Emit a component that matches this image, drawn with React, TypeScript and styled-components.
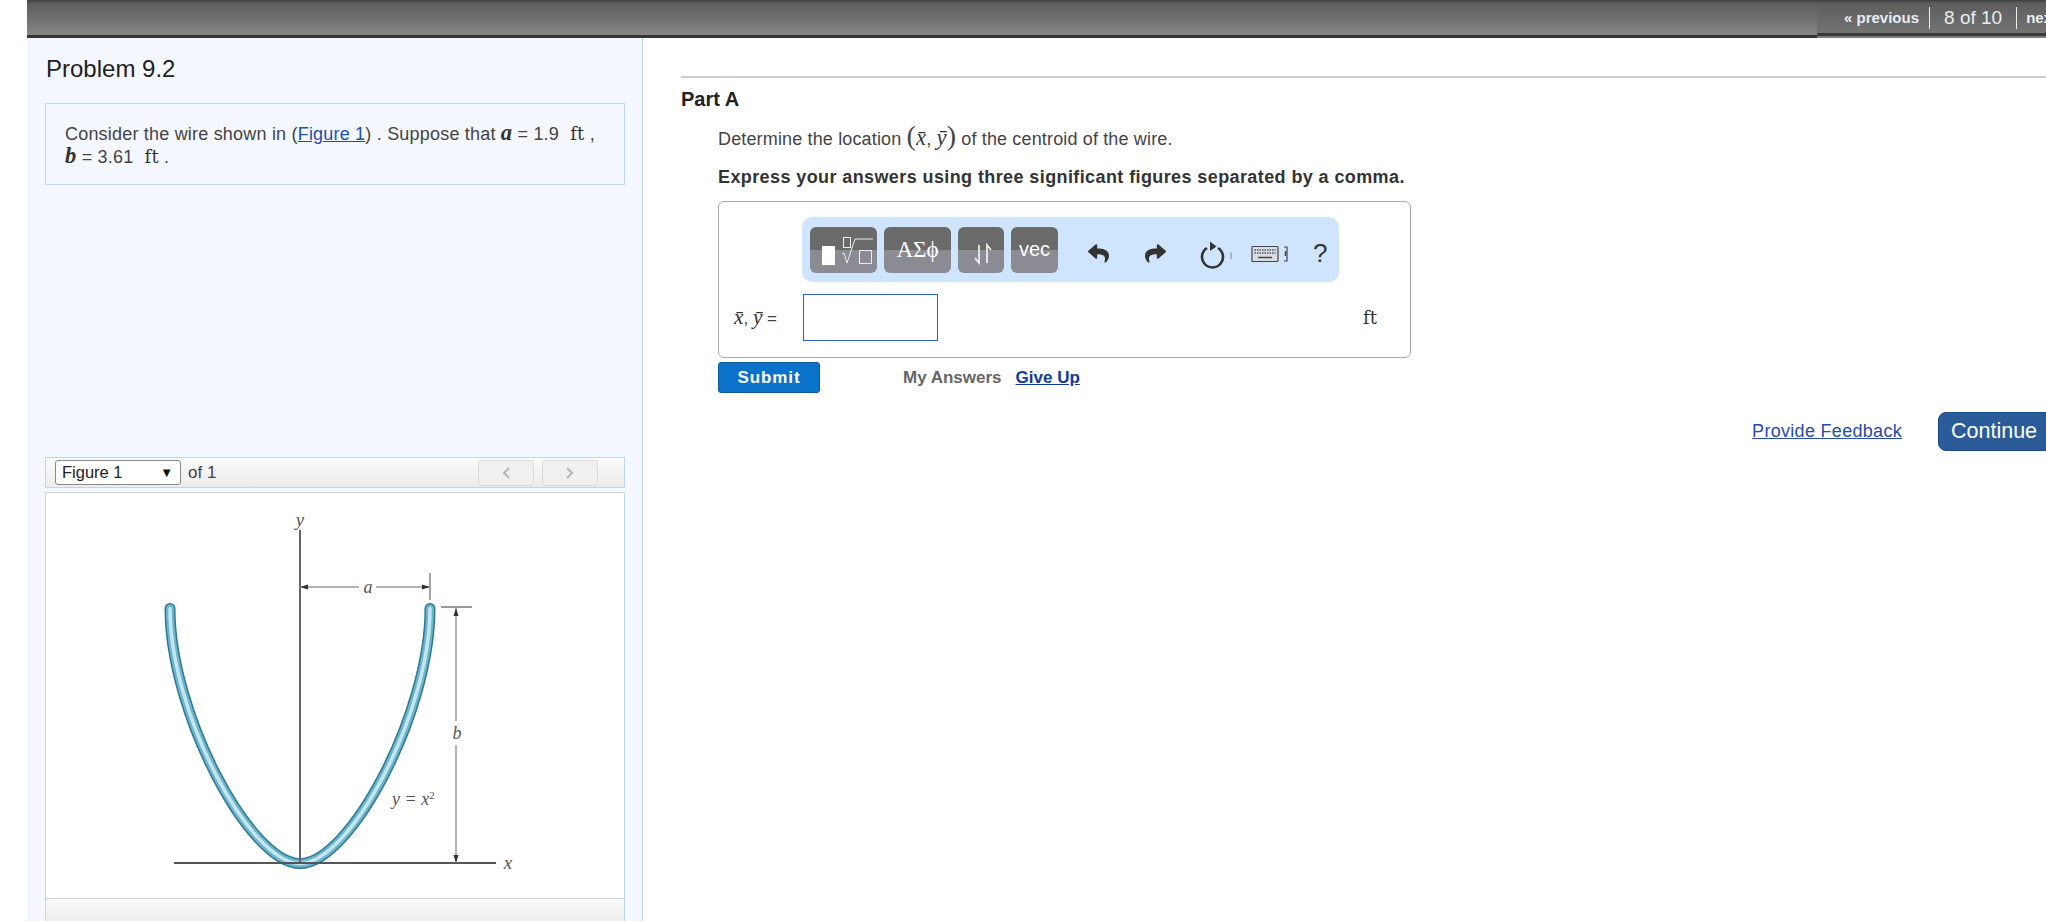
import React from "react";
import styled, { createGlobalStyle } from "styled-components";
import { FaReply, FaShare } from "react-icons/fa";

const GlobalStyle = createGlobalStyle`
  html, body {
    margin: 0;
    padding: 0;
    background: #fff;
    overflow: hidden;
    height: 921px;
  }
  body {
    font-family: "Liberation Sans", Arial, sans-serif;
    color: #333;
  }
`;

export const App: React.FC = () => {
  return (
    <Page>
      <GlobalStyle />
      <TopBar>
        <PageNav>
          <NavLink>« previous</NavLink>
          <NavCount>8 of 10</NavCount>
          <NavLink $last>next »</NavLink>
        </PageNav>
      </TopBar>
      <Columns>
        <LeftPanel>
          <Title>Problem 9.2</Title>
          <IntroBox>
            Consider the wire shown in (<FigureLink>Figure 1</FigureLink>) . Suppose that <MathVar $bold>a</MathVar> = 1.9 <Unit>ft</Unit> ,
            <br />
            <MathVar $bold>b</MathVar> = 3.61 <Unit>ft</Unit> .
          </IntroBox>
          <FigureBar>
            <FigureSelect>
              <span>Figure 1</span>
              <SelectArrow>▼</SelectArrow>
            </FigureSelect>
            <OfLabel>of 1</OfLabel>
            <PagerButton $first>
              <Chevron viewBox="0 0 10 14"><path d="M8 2 L3 7 L8 12" /></Chevron>
            </PagerButton>
            <PagerButton>
              <Chevron viewBox="0 0 10 14"><path d="M2 2 L7 7 L2 12" /></Chevron>
            </PagerButton>
          </FigureBar>
          <FigureBox>
            <WireFigure />
          </FigureBox>
          <FigureFooter />
        </LeftPanel>
        <RightPanel>
          <Rule />
          <PartTitle>Part A</PartTitle>
          <PartBody>
            <Question>
              Determine the location <Paren>(</Paren><MathVar>x̄</MathVar>, <MathVar>ȳ</MathVar><Paren>)</Paren> of the centroid of the wire.
            </Question>
            <Instruction>Express your answers using three significant figures separated by a comma.</Instruction>
            <AnswerBox>
              <Palette>
                <ToolButton $w={67}><RootGlyph /></ToolButton>
                <ToolButton $w={67}><GreekText>ΑΣϕ</GreekText></ToolButton>
                <ToolButton $w={46}><ArrowsGlyph /></ToolButton>
                <ToolButton $w={47}><VecText>vec</VecText></ToolButton>
                <IconSlot $w={28} $ml={26}><FaReply size={21} /></IconSlot>
                <IconSlot $w={28} $ml={29}><FaShare size={21} /></IconSlot>
                <IconSlot $w={38} $ml={29}><ResetGlyph /></IconSlot>
                <IconSlot $w={40} $ml={14}><KeyboardGlyph /></IconSlot>
                <HelpMark>?</HelpMark>
              </Palette>
              <AnswerRow>
                <AnswerLabel><MathVar>x̄</MathVar>, <MathVar>ȳ</MathVar> =</AnswerLabel>
                <AnswerInput />
                <AnswerUnit>ft</AnswerUnit>
              </AnswerRow>
            </AnswerBox>
            <ActionRow>
              <SubmitButton>Submit</SubmitButton>
              <MyAnswers>My Answers</MyAnswers>
              <GiveUp>Give Up</GiveUp>
            </ActionRow>
          </PartBody>
          <FooterRow>
            <Feedback>Provide Feedback</Feedback>
            <ContinueButton>Continue</ContinueButton>
          </FooterRow>
        </RightPanel>
      </Columns>
    </Page>
  );
};

export default App;

const WIRE = "M124 115.5 C124 220.5 204 370.5 254 370.5 C304 370.5 384 220.5 384 115.5";

const WireFigure: React.FC = () => (
  <FigureSvg viewBox="0 0 576 404">
    <path d={WIRE} fill="none" stroke="#2d7a92" strokeWidth="11" strokeLinecap="round" />
    <path d={WIRE} fill="none" stroke="#6fb4cb" strokeWidth="8" strokeLinecap="round" />
    <path d={WIRE} fill="none" stroke="#c4e6f0" strokeWidth="3.5" strokeLinecap="round" />
    <path d="M254 37 V370" stroke="#666" strokeWidth="2" />
    <path d="M128 370 H450" stroke="#555" strokeWidth="2" />
    <path d="M254 94 H313 M330 94 H384" stroke="#999" strokeWidth="1.5" />
    <path d="M254 94 l8 -2.5 v5 z M384 94 l-8 -2.5 v5 z" fill="#333" />
    <path d="M384 80 V107" stroke="#888" strokeWidth="1.5" />
    <path d="M395 114 H426" stroke="#777" strokeWidth="1.5" />
    <path d="M410 115 V228 M410 252 V370" stroke="#999" strokeWidth="1.5" />
    <path d="M410 115 l-2.5 8 h5 z M410 370 l-2.5 -8 h5 z" fill="#333" />
    <FigureText x="254" y="33" textAnchor="middle" fontSize="19">y</FigureText>
    <FigureText x="322" y="100" textAnchor="middle" fontSize="18">a</FigureText>
    <FigureText x="411" y="246" textAnchor="middle" fontSize="18">b</FigureText>
    <FigureText x="462" y="376" textAnchor="middle" fontSize="19">x</FigureText>
    <FigureText x="346" y="312" fontSize="18">y = x<tspan dy="-6" fontSize="11" fontStyle="normal">2</tspan></FigureText>
  </FigureSvg>
);

const RootGlyph: React.FC = () => (
  <GlyphSvg width="67" height="46" viewBox="0 0 67 46">
    <rect x="12" y="19" width="13" height="19" fill="#fff" />
    <rect x="33.5" y="10.5" width="7" height="10" fill="none" stroke="#eee" />
    <path d="M32 27 L34 26 L37 36 L45 12 H63" fill="none" stroke="#eee" />
    <rect x="49.5" y="23.5" width="12" height="13" fill="none" stroke="#eee" />
  </GlyphSvg>
);

const ArrowsGlyph: React.FC = () => (
  <GlyphSvg width="46" height="46" viewBox="0 0 46 46">
    <path d="M21 18 V36 L17 31 M29 36 V18 L33 23" fill="none" stroke="#f2f2f2" strokeWidth="1.7" />
  </GlyphSvg>
);

const ResetGlyph: React.FC = () => (
  <GlyphSvg width="38" height="30" viewBox="0 0 38 30">
    <path d="M9 9 A10.5 10.5 0 1 0 20 9" fill="none" stroke="#333" strokeWidth="2.6" />
    <path d="M12 2.5 L18.5 7.5 L12 12 Z" fill="#333" />
    <path d="M33 13 V20" stroke="#888" strokeWidth="1" />
  </GlyphSvg>
);

const KeyboardGlyph: React.FC = () => (
  <GlyphSvg width="40" height="20" viewBox="0 0 40 20">
    <rect x="2" y="2.5" width="26" height="15" rx="1" fill="#d7dde4" stroke="#444" strokeWidth="1.2" />
    <path d="M4.5 6 H25.5 M4.5 9 H25.5" stroke="#555" strokeWidth="1.3" strokeDasharray="1.5 1" />
    <path d="M8 13.5 H22" stroke="#444" strokeWidth="1.5" />
    <path d="M34 3 H37 V17 H34" fill="none" stroke="#444" strokeWidth="1.2" />
    <path d="M35.5 7 V12" stroke="#444" strokeWidth="1.5" />
  </GlyphSvg>
);

const Page = styled.div`
  width: 2026px;
  margin-left: 27px;
  height: 921px;
  overflow: hidden;
`;

const TopBar = styled.div`
  height: 38px;
  display: flex;
  justify-content: flex-end;
  background: linear-gradient(to bottom, #3e3e3e 0, #5d5d5d 3px, #868686 35px, #333 35px, #333 38px);
`;

const PageNav = styled.div`
  box-sizing: border-box;
  width: 236px;
  height: 36px;
  display: flex;
  align-items: center;
  color: #e8edf5;
  white-space: nowrap;
  background: linear-gradient(to bottom, #3e3e3e 0, #5d5d5d 3px, #747474 33px);
  border-bottom: 3px solid #3a3a3a;
  box-shadow: 0 2px 0 #7c7c7c;
  padding: 2px 0 0 27px;
`;

const NavLink = styled.span<{ $last?: boolean }>`
  font-size: 15px;
  font-weight: 700;
  padding-left: ${(props) => (props.$last ? "9px" : "0")};
`;

const NavCount = styled.span`
  font-size: 19px;
  margin-left: 10px;
  padding: 0 14px;
  line-height: 22px;
  border-left: 1px solid #eee;
  border-right: 1px solid #eee;
`;

const Columns = styled.div`
  display: flex;
  height: 883px;
`;

const LeftPanel = styled.div`
  width: 616px;
  flex-shrink: 0;
  box-sizing: border-box;
  background: #f4f8fe;
  border-right: 1px solid #c5d6e8;
  padding: 16px 18px 0 18px;
`;

const Title = styled.h1`
  margin: 0 0 19px 1px;
  font-size: 24px;
  line-height: 30px;
  font-weight: 400;
  color: #222;
`;

const IntroBox = styled.div`
  box-sizing: border-box;
  width: 580px;
  height: 82px;
  border: 1px solid #c3d5e8;
  padding: 18px 19px;
  font-size: 18px;
  line-height: 22px;
  letter-spacing: 0.2px;
  color: #444;
`;

const FigureLink = styled.a`
  color: #1f4fa8;
  text-decoration: underline;
`;

const MathVar = styled.i<{ $bold?: boolean }>`
  font-family: "Liberation Serif", "DejaVu Serif", serif;
  font-size: 1.25em;
  font-weight: ${(props) => (props.$bold ? 700 : 400)};
  color: #333;
`;

const Unit = styled.span`
  font-family: "DejaVu Serif", "Liberation Serif", serif;
  font-size: 18px;
  color: #333;
  margin: 0 0 0 6px;
`;

const FigureBar = styled.div`
  box-sizing: border-box;
  margin-top: 272px;
  width: 580px;
  height: 31px;
  display: flex;
  align-items: center;
  padding: 0 26px 0 9px;
  border: 1px solid #c3d5e8;
  background: linear-gradient(to bottom, #fafafa, #ececec);
`;

const FigureSelect = styled.div`
  box-sizing: border-box;
  width: 126px;
  height: 25px;
  display: flex;
  align-items: center;
  justify-content: space-between;
  padding: 0 7px 0 6px;
  background: #fff;
  border: 1px solid #8a8a8a;
  border-radius: 3px;
  font-size: 16.5px;
  color: #222;
`;

const SelectArrow = styled.span`
  font-size: 13px;
  color: #111;
`;

const OfLabel = styled.span`
  margin-left: 7px;
  font-size: 17px;
  color: #444;
`;

const PagerButton = styled.div<{ $first?: boolean }>`
  box-sizing: border-box;
  width: 56px;
  height: 26px;
  margin-left: ${(props) => (props.$first ? "auto" : "8px")};
  display: flex;
  align-items: center;
  justify-content: center;
  background: #f0f0f0;
  border: 1px solid #dcdcdc;
  border-radius: 3px;
`;

const Chevron = styled.svg`
  width: 10px;
  height: 14px;
  fill: none;
  stroke: #b5b5b5;
  stroke-width: 2;
`;

const FigureBox = styled.div`
  box-sizing: border-box;
  margin-top: 4px;
  width: 580px;
  height: 406px;
  background: #fff;
  border: 1px solid #c3d5e8;
  border-bottom: 0;
`;

const FigureSvg = styled.svg`
  display: block;
  width: 576px;
  height: 404px;
`;

const FigureText = styled.text`
  font-family: "Liberation Serif", serif;
  font-style: italic;
  fill: #555;
`;

const FigureFooter = styled.div`
  box-sizing: border-box;
  width: 580px;
  height: 30px;
  border: 1px solid #c3d5e8;
  background: linear-gradient(to bottom, #f9f9f9, #ececec);
`;

const RightPanel = styled.div`
  flex: 1;
  min-width: 0;
  padding: 38px 0 0 38px;
`;

const Rule = styled.div`
  height: 2px;
  background: #cfcfcf;
`;

const PartTitle = styled.h2`
  margin: 9px 0 0 0;
  font-size: 20px;
  line-height: 24px;
  font-weight: 700;
  color: #222;
`;

const PartBody = styled.div`
  padding-left: 37px;
`;

const Question = styled.div`
  margin-top: 14px;
  height: 26px;
  line-height: 26px;
  font-size: 18px;
  letter-spacing: 0.15px;
  color: #444;
  white-space: nowrap;
`;

const Paren = styled.span`
  font-family: "Liberation Serif", serif;
  font-size: 28px;
  line-height: 20px;
`;

const Instruction = styled.div`
  margin-top: 15px;
  font-size: 18px;
  line-height: 22px;
  font-weight: 700;
  letter-spacing: 0.4px;
  white-space: nowrap;
  color: #333;
`;

const AnswerBox = styled.div`
  box-sizing: border-box;
  margin-top: 13px;
  width: 693px;
  height: 157px;
  padding: 15px 0 0 83px;
  border: 1px solid #aaa;
  border-radius: 6px;
`;

const Palette = styled.div`
  box-sizing: border-box;
  width: 537px;
  height: 65px;
  display: flex;
  align-items: center;
  gap: 7px;
  padding-left: 8px;
  background: #cfe5fd;
  border-radius: 10px;
`;

const ToolButton = styled.div<{ $w: number }>`
  box-sizing: border-box;
  width: ${(props) => props.$w}px;
  height: 46px;
  flex-shrink: 0;
  display: flex;
  align-items: center;
  justify-content: center;
  color: #fff;
  border-radius: 6px;
  background: linear-gradient(to bottom, #6a6a6a 0, #6a6a6a 50%, #8b8b93 50%, #8b8b93 100%);
`;

const GlyphSvg = styled.svg`
  display: block;
`;

const GreekText = styled.span`
  font-family: "Liberation Serif", serif;
  font-size: 23px;
`;

const VecText = styled.span`
  font-size: 20px;
`;

const IconSlot = styled.div<{ $w: number; $ml: number }>`
  width: ${(props) => props.$w}px;
  margin: 8px 0 0 ${(props) => props.$ml - 7}px;
  flex-shrink: 0;
  display: flex;
  align-items: center;
  justify-content: center;
  color: #333;
`;

const HelpMark = styled.span`
  margin: 8px 0 0 16px;
  font-size: 26px;
  color: #333;
`;

const AnswerRow = styled.div`
  display: flex;
  align-items: center;
  height: 47px;
  margin: 12px 0 0 -83px;
`;

const AnswerLabel = styled.div`
  width: 84px;
  padding-left: 15px;
  box-sizing: border-box;
  font-size: 17px;
  color: #444;
  white-space: nowrap;
`;

const AnswerInput = styled.div`
  box-sizing: border-box;
  width: 135px;
  height: 47px;
  background: #fff;
  border: 1px solid #2f5fc8;
`;

const AnswerUnit = styled.span`
  margin-left: auto;
  padding-right: 33px;
  font-family: "DejaVu Serif", "Liberation Serif", serif;
  font-size: 18px;
  color: #333;
`;

const ActionRow = styled.div`
  display: flex;
  align-items: center;
  margin-top: 4px;
`;

const SubmitButton = styled.div`
  box-sizing: border-box;
  width: 102px;
  height: 31px;
  display: flex;
  align-items: center;
  justify-content: center;
  background: #0b72c9;
  border: 1px solid #0a5a9e;
  border-radius: 3px;
  color: #fff;
  font-size: 17px;
  font-weight: 700;
  letter-spacing: 0.9px;
`;

const MyAnswers = styled.span`
  margin-left: 83px;
  font-size: 17px;
  font-weight: 700;
  color: #666;
`;

const GiveUp = styled.a`
  margin-left: 14px;
  font-size: 17px;
  font-weight: 700;
  color: #123a9c;
  text-decoration: underline;
`;

const FooterRow = styled.div`
  display: flex;
  justify-content: flex-end;
  align-items: center;
  margin-top: 19px;
`;

const Feedback = styled.a`
  font-size: 18px;
  letter-spacing: 0.3px;
  color: #2a4ba8;
  text-decoration: underline;
`;

const ContinueButton = styled.div`
  box-sizing: border-box;
  width: 115px;
  height: 39px;
  margin-left: 36px;
  padding-left: 12px;
  display: flex;
  align-items: center;
  background: #2a5c99;
  border: 1px solid #1e4a82;
  border-radius: 8px;
  color: #fff;
  font-size: 21.5px;
`;
